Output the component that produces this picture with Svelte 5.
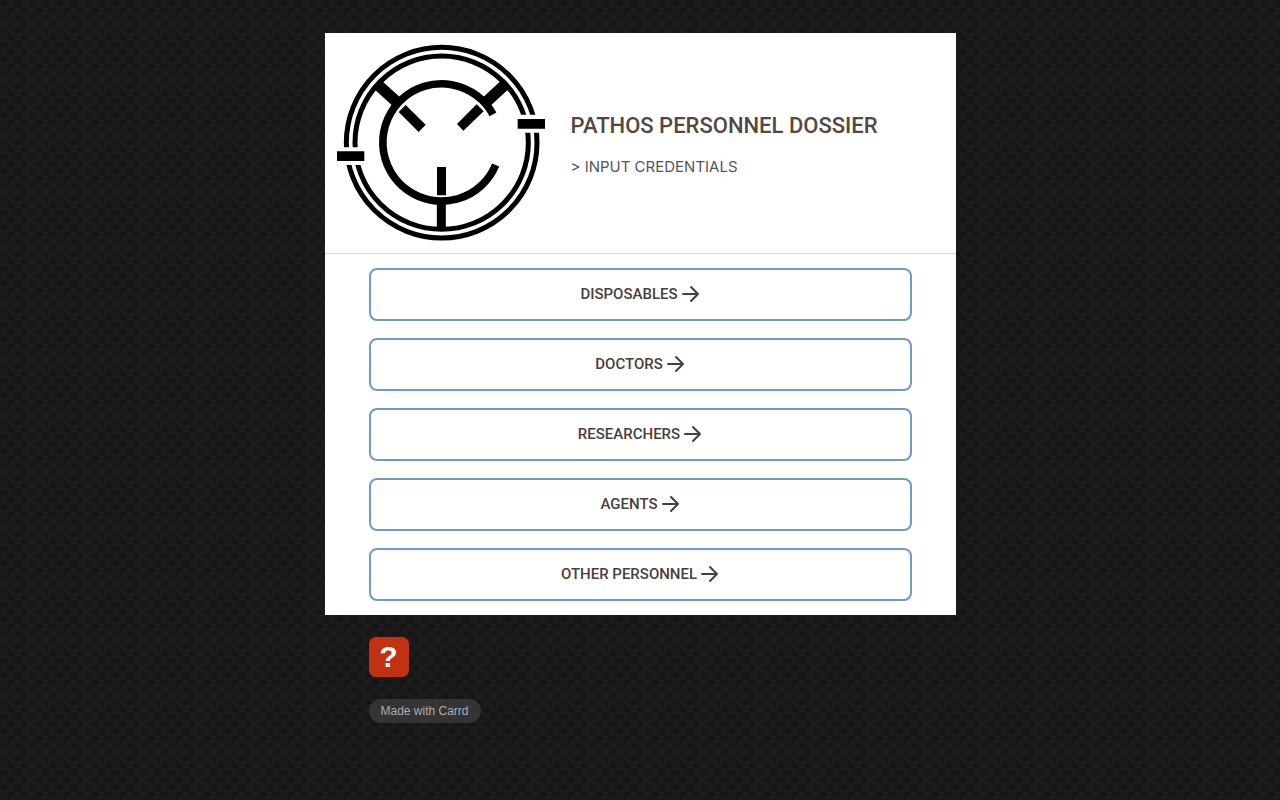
<script>
  const links = [
    { label: 'DISPOSABLES', href: '#disposables' },
    { label: 'DOCTORS', href: '#doctors' },
    { label: 'RESEARCHERS', href: '#researchers' },
    { label: 'AGENTS', href: '#agents' },
    { label: 'OTHER PERSONNEL', href: '#other' }
  ];
</script>

<main>
  <section class="card">
    <header>
      <svg class="logo" viewBox="0 9 702 660" role="img" aria-label="Pathos logo">
        <g fill="none" stroke="#000">
          <circle cx="350" cy="338" r="286" stroke-width="15" />
          <circle cx="350" cy="338" r="260" stroke-width="15" />
          <path d="M504 253A176 176 0 1 0 512 405" stroke-width="23" />
          <path d="M158 164L222 222M541 163L476 223" stroke-width="34" />
          <path d="M349 510V602" stroke-width="27" />
        </g>
        <!-- breaks in the outer rings -->
        <path fill="#fff" d="M30 352H125V405H30zM570 254H665V308H570z" />
        <path d="M36 364H118V393H36zM578 267H660V296H578z" />
        <!-- spokes inside the face -->
        <g stroke="#fff" stroke-width="4">
          <path d="M242 222L305 284L281 309L218 246z" />
          <path d="M455 220L479 244L415 305L393 282z" />
          <path d="M334 409H365V498H334z" />
        </g>
      </svg>
      <div class="intro">
        <h1>PATHOS PERSONNEL DOSSIER</h1>
        <p>&gt; INPUT CREDENTIALS</p>
      </div>
    </header>

    <nav>
      {#each links as link}
        <a class="button" href={link.href}>
          {link.label}
          <svg class="arrow" viewBox="0 0 18 18" aria-hidden="true">
            <path d="M1 9H16M9 2L16 9L9 16" />
          </svg>
        </a>
      {/each}
    </nav>
  </section>

  <footer>
    <a class="help" href="#help" aria-label="Help">?</a>
    <a class="credit" href="#carrd">Made with Carrd</a>
  </footer>
</main>

<style>
  :global(body) {
    background-color: #1b1b1b;
    background-image:
      radial-gradient(ellipse 6px 4px at 4px 3px, #121212, transparent),
      radial-gradient(ellipse 6px 4px at 11px 10px, #121212, transparent);
    background-size: 14px 14px;
  }

  main {
    box-sizing: border-box;
    max-width: 631px;
    margin: 0 auto;
    padding: 33px 0;
    font-family: Inter, sans-serif;
  }

  .card {
    background: #fff;
  }

  header {
    display: flex;
    align-items: center;
    gap: 12px;
    border-bottom: 1px solid #d8d8d8;
  }

  .logo {
    flex: none;
    width: 234px;
    height: 220px;
  }

  h1 {
    margin: 0 0 16px;
    font-family: Roboto, sans-serif;
    font-size: 22px;
    font-weight: 500;
    line-height: 32px;
    color: #534842;
  }

  p {
    margin: 0;
    font-size: 15px;
    line-height: 18px;
    color: #555;
  }

  nav {
    display: flex;
    flex-direction: column;
    gap: 17px;
    padding: 14px 44px;
  }

  .button {
    display: flex;
    align-items: center;
    justify-content: center;
    gap: 4px;
    box-sizing: border-box;
    height: 53px;
    padding-bottom: 1px;
    border: 2px solid #709ac6;
    border-radius: 8px;
    font-family: Roboto, sans-serif;
    font-size: 15px;
    font-weight: 500;
    color: #483f3c;
    text-decoration: none;
  }

  .arrow {
    width: 18px;
    height: 18px;
    fill: none;
    stroke: #483f3c;
    stroke-width: 2;
    stroke-linecap: round;
    stroke-linejoin: round;
  }

  footer {
    display: flex;
    flex-direction: column;
    align-items: flex-start;
    gap: 22px;
    padding: 22px 44px;
    font-family: "Liberation Sans", Arial, sans-serif;
  }

  .help {
    width: 40px;
    border-radius: 7px;
    background: #c03212;
    color: #fff;
    font-size: 30px;
    font-weight: 700;
    line-height: 40px;
    text-align: center;
    text-decoration: none;
  }

  .credit {
    padding: 0 12px;
    border-radius: 12px;
    background: #343434;
    color: #adadad;
    font-size: 12px;
    line-height: 24px;
    text-decoration: none;
  }
</style>
